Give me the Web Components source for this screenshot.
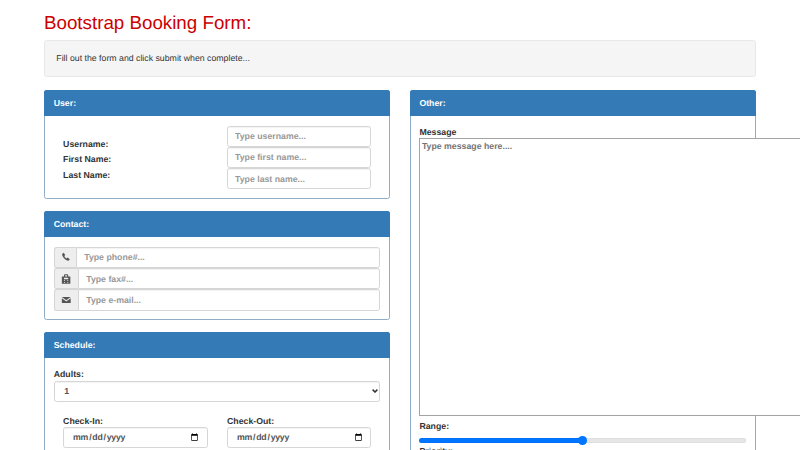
<!DOCTYPE html>
<html>
<head>
<meta charset="utf-8">
<title>Bootstrap Booking Form</title>
<style>
  html { overflow: hidden; }
  body {
    margin: 0;
    font-family: "Liberation Sans", Arial, sans-serif;
    font-size: 8.75px;
    line-height: 12.5px;
    color: #333;
    background: #fff;
    text-rendering: geometricPrecision;
  }
</style>
</head>
<body>
<booking-page>
  <booking-panel slot="left" heading="User:">
    <user-fields></user-fields>
  </booking-panel>
  <booking-panel slot="left" heading="Contact:">
    <icon-input icon="phone" placeholder="Type phone#..."></icon-input>
    <icon-input icon="fax" placeholder="Type fax#..."></icon-input>
    <icon-input icon="mail" placeholder="Type e-mail..."></icon-input>
  </booking-panel>
  <booking-panel slot="left" heading="Schedule:">
    <schedule-fields></schedule-fields>
  </booking-panel>
  <booking-panel slot="right" heading="Other:">
    <other-fields></other-fields>
  </booking-panel>
</booking-page>

<script>
const controlCss = `
  .control {
    display: block;
    box-sizing: border-box;
    width: 100%;
    height: 21.25px;
    padding: 0 7px;
    margin: 0;
    font: bold 8.75px/12.5px "Liberation Sans", Arial, sans-serif;
    text-rendering: geometricPrecision;
    color: #555;
    background: #fff;
    border: 1px solid #d6d6d6;
    border-radius: 2.5px;
    outline: none;
    box-shadow: inset 0 1px 1px rgba(0,0,0,.05);
  }
  .control::placeholder { color: #999; opacity: 1; }
  label { display: block; font-weight: bold; line-height: 12.5px; }
`;

class BookingPage extends HTMLElement {
  constructor() {
    super();
    this.attachShadow({mode:'open'});
    this.shadowRoot.innerHTML = `
      <style>
        :host { display: block; padding: 0 44px; }
        h2 {
          margin: 0;
          padding-top: 12.5px;
          height: 40px;
          box-sizing: border-box;
          font-size: 18.75px;
          line-height: 20.6px;
          font-weight: 500;
          color: #c00;
        }
        .well {
          box-sizing: border-box;
          height: 36.5px;
          margin-bottom: 13.5px;
          padding: 10.75px 11.3px;
          background: #f5f5f5;
          border: 1px solid #e8e8e8;
          border-radius: 2.5px;
        }
        .cols { display: flex; gap: 19.4px; }
        .col { flex: 1; min-width: 0; }
      </style>
      <h2>Bootstrap Booking Form:</h2>
      <div class="well">Fill out the form and click submit when complete...</div>
      <div class="cols">
        <div class="col"><slot name="left"></slot></div>
        <div class="col"><slot name="right"></slot></div>
      </div>
    `;
  }
}

class BookingPanel extends HTMLElement {
  constructor() {
    super();
    this.attachShadow({mode:'open'});
    this.shadowRoot.innerHTML = `
      <style>
        :host {
          display: block;
          margin-bottom: 12.5px;
          background: #fff;
          border: 1px solid #8fadc6;
          border-radius: 2.5px;
        }
        header {
          box-sizing: border-box;
          height: 25.6px;
          margin: -1px -1px 0;
          padding: 7px 9.7px;
          color: #fff;
          font-weight: bold;
          background: #337ab7;
          border-radius: 2.5px 2.5px 0 0;
        }
        .body { padding: 10px 9px 8.4px 8.7px; }
      </style>
      <header></header>
      <div class="body"><slot></slot></div>
    `;
    this.shadowRoot.querySelector('header').textContent = this.getAttribute('heading');
  }
}

class UserFields extends HTMLElement {
  constructor() {
    super();
    this.attachShadow({mode:'open'});
    this.shadowRoot.innerHTML = `
      <style>
        ${controlCss}
        :host { display: grid; grid-template-columns: 1fr 1fr; }
        .names { padding: 12px 9.4px 0; }
        .names label { margin-bottom: 3.1px; }
        .inputs { padding: 0 9px 0 10px; }
      </style>
      <div class="names">
        <label>Username:</label>
        <label>First Name:</label>
        <label>Last Name:</label>
      </div>
      <div class="inputs">
        <input class="control" placeholder="Type username...">
        <input class="control" placeholder="Type first name...">
        <input class="control" placeholder="Type last name...">
      </div>
    `;
  }
}

const icons = {
  phone: '<path d="M3.200 1 5 3.600 3.900 4.800c.5 1.300 1.300 2.200 2.500 2.800L7.600 6.400 10.400 8.400 8.800 10.300C5 10 1.400 6 1.300 2.500z"/>',
  fax: '<path fill-rule="evenodd" d="M3.500 3V1.700C3.500.7 4.200.4 5.500.4h1C7.800.4 8.500.7 8.500 1.700V3H11v8.600H1V3zM4.800 3h2.400V1.900q0-.4-.5-.4H5.300q-.5 0-.5.4zM3.500 4.400v1.700h5V4.400zM3.500 7.300v1h1.200v-1zM7.300 7.300v1h1.200v-1zM3.500 9.300v1h1.200v-1zM7.300 9.300v1h1.200v-1z"/>',
  mail: '<path d="M1 2.400h10.400L6.200 6.200z"/><path d="M1 3.800 6.200 7.700 11.400 3.800v5.600H1z"/>'
};

class IconInput extends HTMLElement {
  constructor() {
    super();
    this.attachShadow({mode:'open'});
    const icon = this.getAttribute('icon');
    this.shadowRoot.innerHTML = `
      <style>
        ${controlCss}
        :host { display: flex; }
        .addon {
          display: flex;
          align-items: center;
          box-sizing: border-box;
          flex: none;
          width: ${icon === 'phone' ? 22.5 : 24.5}px;
          height: 21.25px;
          padding-left: 6.2px;
          background: #eee;
          border: 1px solid #d6d6d6;
          border-right: 0;
          border-radius: 2.5px 0 0 2.5px;
        }
        svg { width: 10.2px; height: 10.2px; fill: #555; }
        .control { flex: 1; min-width: 0; border-radius: 0 2.5px 2.5px 0; }
      </style>
      <span class="addon"><svg viewBox="0 0 12 12">${icons[icon]}</svg></span>
      <input class="control" placeholder="${this.getAttribute('placeholder')}">
    `;
  }
}

class ScheduleFields extends HTMLElement {
  constructor() {
    super();
    this.attachShadow({mode:'open'});
    this.shadowRoot.innerHTML = `
      <style>
        ${controlCss}
        :host { display: block; }
        .select { position: relative; }
        select.control { -webkit-appearance: none; appearance: none; padding-left: 9.5px; }
        .select svg {
          position: absolute;
          right: 2.5px;
          top: 8.500px;
          width: 6px;
          height: 4px;
          fill: none;
          stroke: #333;
          stroke-width: 1.500;
        }
        .dates { display: grid; grid-template-columns: 1fr 1fr; margin-top: 12.7px; }
        .dates > div { padding: 0 9.400px; }
        .dates > div + div { padding: 0 9px 0 10px; }
        input[type=date] { padding: 0 5.500px 0 8px; }
        input[type=date]::-webkit-datetime-edit { letter-spacing: -.25px; }
      </style>
      <label>Adults:</label>
      <div class="select">
        <select class="control"><option>1</option><option>2</option><option>3</option></select>
        <svg viewBox="0 0 6 4"><path d="M.6.6 3 3 5.400.6"/></svg>
      </div>
      <div class="dates">
        <div><label>Check-In:</label><input class="control" type="date"></div>
        <div><label>Check-Out:</label><input class="control" type="date"></div>
      </div>
    `;
  }
}

class OtherFields extends HTMLElement {
  constructor() {
    super();
    this.attachShadow({mode:'open'});
    this.shadowRoot.innerHTML = `
      <style>
        ${controlCss}
        :host { display: block; }
        textarea {
          display: block;
          box-sizing: border-box;
          width: 640px;
          height: 278.400px;
          margin: 0;
          padding: 1px 1.500px;
          font: bold 8.75px/12.5px "Liberation Sans", Arial, sans-serif;
          text-rendering: geometricPrecision;
          border: 1px solid #a3a3a3;
          border-radius: 0;
          outline: none;
          resize: none;
        }
        textarea::placeholder { color: #757575; }
        .range { margin-top: 4px; }
        input[type=range] {
          -webkit-appearance: none;
          appearance: none;
          display: block;
          width: 100%;
          height: 9px;
          margin: 3px 0 0;
          background: transparent;
        }
        input[type=range]::-webkit-slider-runnable-track {
          height: 5px;
          border-radius: 2.500px;
          background: linear-gradient(to right, #0075ff 50%, #e6e6e6 50%);
          box-shadow: inset 0 0 0 .5px rgba(0,0,0,.06);
        }
        input[type=range]::-webkit-slider-thumb {
          -webkit-appearance: none;
          width: 8.700px;
          height: 8.700px;
          margin-top: -1.850px;
          border-radius: 50%;
          background: #0075ff;
        }
      </style>
      <label>Message</label>
      <textarea placeholder="Type message here...."></textarea>
      <label class="range">Range:</label>
      <input type="range" min="0" max="100" value="50">
      <label>Priority:</label>
    `;
  }
}

customElements.define('booking-page', BookingPage);
customElements.define('booking-panel', BookingPanel);
customElements.define('user-fields', UserFields);
customElements.define('icon-input', IconInput);
customElements.define('schedule-fields', ScheduleFields);
customElements.define('other-fields', OtherFields);
</script>
</body>
</html>
